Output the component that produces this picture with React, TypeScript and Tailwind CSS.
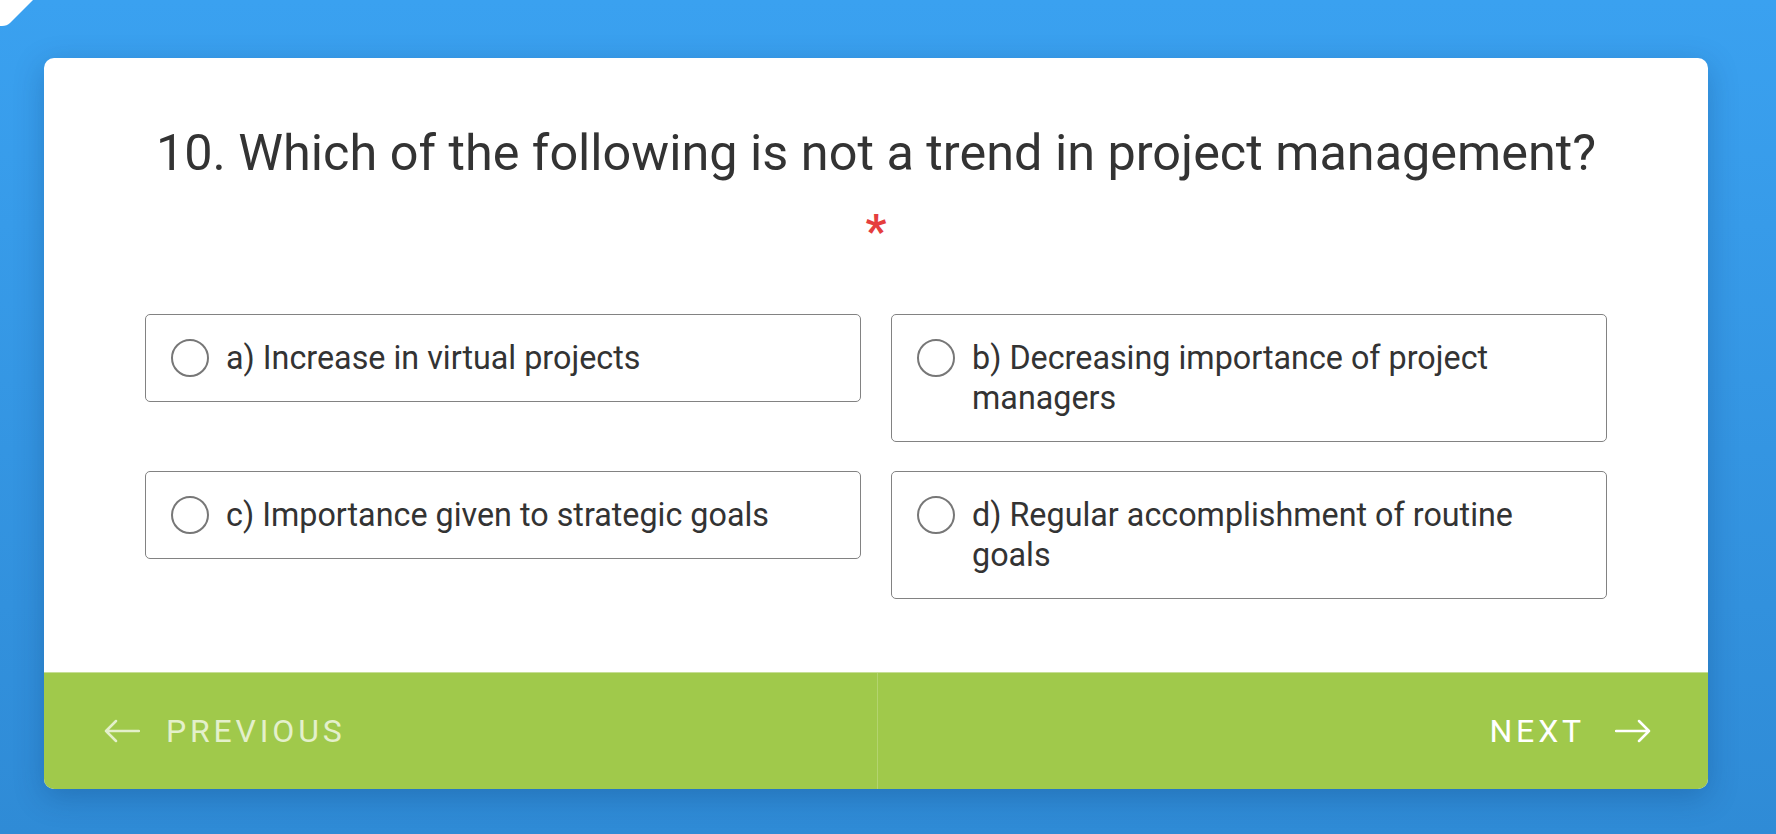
import React from "react";

const options = [
  "a) Increase in virtual projects",
  "b) Decreasing importance of project managers",
  "c) Importance given to strategic goals",
  "d) Regular accomplishment of routine goals",
];

export default function App() {
  return (
    <div
      className="relative w-full h-[834px] overflow-hidden bg-gradient-to-b from-[#3aa1f0] to-[#2f8bd6] pt-[58px] pl-[44px]"
      style={{ fontFamily: "Roboto, 'Noto Sans', sans-serif" }}
    >
      <svg className="absolute left-0 top-0" width="40" height="30" viewBox="0 0 40 30">
        <path d="M0 0 H33 L10 23 Q7 26 2 26 H0 Z" fill="#ffffff" />
      </svg>
      <div className="w-[1664px] h-[731px] bg-white rounded-[10px] overflow-hidden flex flex-col shadow-[0_8px_30px_rgba(0,40,90,0.25)]">
        <div className="flex-1 flex flex-col items-center pt-[65px]">
          <h1 className="text-[50.4px] leading-[60px] text-[#333333] font-normal text-center">
            10. Which of the following is not a trend in project management?
          </h1>
          <div className="h-[40px] mt-[30px] flex items-center justify-center">
            <span className="text-[#e53e3e] text-[46px] leading-[40px] font-bold -translate-y-[2px]">*</span>
          </div>
          <div className="grid grid-cols-2 gap-x-[30px] gap-y-[29px] w-[1462px] mt-[61px] items-start">
            {options.map((o) => (
              <div
                key={o}
                className="flex items-start gap-[17px] border border-[#828282] rounded-[5px] pl-[25px] pr-[30px] py-[23px] text-[#333333] text-[32.3px] leading-[40px]"
              >
                <span className="shrink-0 w-[38px] h-[38px] mt-px rounded-full border-2 border-[#777777]" />
                <span>{o}</span>
              </div>
            ))}
          </div>
        </div>
        <div className="h-[117px] bg-[#a0c94b] border-t border-[#c6de96] flex">
          <div className="flex-1 flex items-center pl-[60px] gap-[26px] border-r border-[#b3d46f] text-[#e4f0cb]">
            <svg width="36" height="24" viewBox="0 0 36 24" fill="none" stroke="currentColor" strokeWidth="2.5" strokeLinecap="round" strokeLinejoin="round">
              <path d="M35 12 H2 M12 2 L2 12 L12 22" />
            </svg>
            <span className="text-[32px] tracking-[0.12em]">PREVIOUS</span>
          </div>
          <div className="flex-1 flex items-center justify-end pr-[57px] gap-[30px] text-white">
            <span className="text-[32px] tracking-[0.12em]">NEXT</span>
            <svg width="36" height="24" viewBox="0 0 36 24" fill="none" stroke="currentColor" strokeWidth="2.5" strokeLinecap="round" strokeLinejoin="round">
              <path d="M1 12 H34 M24 2 L34 12 L24 22" />
            </svg>
          </div>
        </div>
      </div>
    </div>
  );
}
